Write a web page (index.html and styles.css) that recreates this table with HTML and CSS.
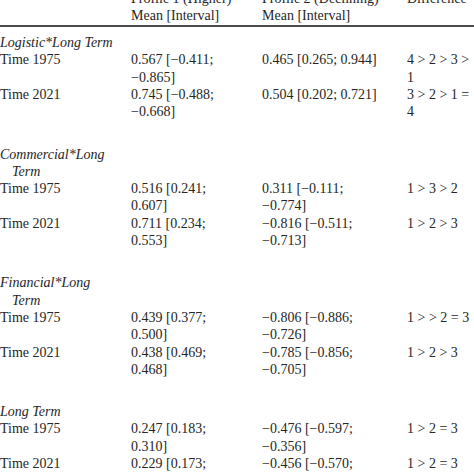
FILE: index.html
```html
<!DOCTYPE html>
<html lang="en">
<head>
<meta charset="utf-8">
<title>Profile means</title>
<link rel="stylesheet" href="styles.css">
</head>
<body>
<table class="results">
  <thead>
    <tr>
      <th class="c1"></th>
      <th class="c2">Profile 1 (Higher)<br>Mean [Interval]</th>
      <th class="c3">Profile 2 (Declining)<br>Mean [Interval]</th>
      <th class="c4">Difference</th>
    </tr>
  </thead>
  <tbody class="group">
    <tr class="group-head"><td class="c1">Logistic*Long Term</td><td class="c2"></td><td class="c3"></td><td class="c4"></td></tr>
    <tr><td class="c1">Time 1975</td><td class="c2">0.567 [−0.411; −0.865]</td><td class="c3">0.465 [0.265; 0.944]</td><td class="c4">4 &gt; 2 &gt; 3 &gt; 1</td></tr>
    <tr><td class="c1">Time 2021</td><td class="c2">0.745 [−0.488; −0.668]</td><td class="c3">0.504 [0.202; 0.721]</td><td class="c4">3 &gt; 2 &gt; 1 = 4</td></tr>
  </tbody>
  <tbody class="group">
    <tr class="group-head"><td class="c1">Commercial*Long Term</td><td class="c2"></td><td class="c3"></td><td class="c4"></td></tr>
    <tr><td class="c1">Time 1975</td><td class="c2">0.516 [0.241; 0.607]</td><td class="c3">0.311 [−0.111; −0.774]</td><td class="c4">1 &gt; 3 &gt; 2</td></tr>
    <tr><td class="c1">Time 2021</td><td class="c2">0.711 [0.234; 0.553]</td><td class="c3">−0.816 [−0.511; −0.713]</td><td class="c4">1 &gt; 2 &gt; 3</td></tr>
  </tbody>
  <tbody class="group">
    <tr class="group-head"><td class="c1">Financial*Long Term</td><td class="c2"></td><td class="c3"></td><td class="c4"></td></tr>
    <tr><td class="c1">Time 1975</td><td class="c2">0.439 [0.377; 0.500]</td><td class="c3">−0.806 [−0.886; −0.726]</td><td class="c4">1 &gt; &gt; 2 = 3</td></tr>
    <tr><td class="c1">Time 2021</td><td class="c2">0.438 [0.469; 0.468]</td><td class="c3">−0.785 [−0.856; −0.705]</td><td class="c4">1 &gt; 2 &gt; 3</td></tr>
  </tbody>
  <tbody class="group">
    <tr class="group-head"><td class="c1">Long Term</td><td class="c2"></td><td class="c3"></td><td class="c4"></td></tr>
    <tr><td class="c1">Time 1975</td><td class="c2">0.247 [0.183; 0.310]</td><td class="c3">−0.476 [−0.597; −0.356]</td><td class="c4">1 &gt; 2 = 3</td></tr>
    <tr><td class="c1">Time 2021</td><td class="c2">0.229 [0.173; 0.285]</td><td class="c3">−0.456 [−0.570; −0.342]</td><td class="c4">1 &gt; 2 = 3</td></tr>
  </tbody>
</table>
</body>
</html>
```

FILE: styles.css
```css
html, body {
  margin: 0;
  padding: 0;
  background: #ffffff;
  overflow: hidden;
}

.results {
  margin-top: -10.5px;
  border-collapse: collapse;
  table-layout: fixed;
  width: 480px;
  font-family: "Liberation Serif", "Times New Roman", serif;
  font-size: 14px;
  line-height: 17.3px;
  color: #262626;
}

.results th,
.results td {
  padding: 0;
  vertical-align: top;
  text-align: left;
  font-weight: normal;
}

.results thead th {
  padding-bottom: 1px;
  border-bottom: 2px solid #4a4a4a;
}

.c1 { width: 131px; }
.c2 { width: 131px; }
.c3 { width: 143px; }
.c4 { width: 75px; }

.results td.c2 { padding-right: 31px; }
.results td.c3 { padding-right: 21px; }
.results td.c4 { padding-left: 2px; padding-right: 7px; }
.results th.c4 { padding-left: 2px; }

.group-head td {
  padding-top: 25px;
}
.group:first-of-type .group-head td {
  padding-top: 7px;
}

.group-head td.c1 {
  font-style: italic;
  padding-left: 12px;
  padding-right: 11px;
  text-indent: -12px;
}
```
